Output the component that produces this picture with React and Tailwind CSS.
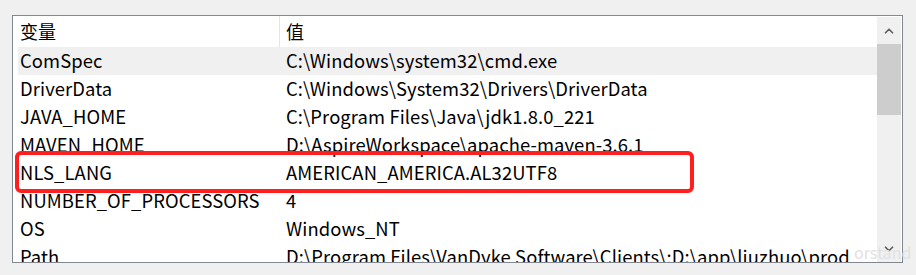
import { ChevronUp, ChevronDown } from 'lucide-react'

const rows = [
  ['ComSpec', 'C:\\Windows\\system32\\cmd.exe'],
  ['DriverData', 'C:\\Windows\\System32\\Drivers\\DriverData'],
  ['JAVA_HOME', 'C:\\Program Files\\Java\\jdk1.8.0_221'],
  ['MAVEN_HOME', 'D:\\AspireWorkspace\\apache-maven-3.6.1'],
  ['NLS_LANG', 'AMERICAN_AMERICA.AL32UTF8'],
  ['NUMBER_OF_PROCESSORS', '4'],
  ['OS', 'Windows_NT'],
  ['Path', 'D:\\Program Files\\VanDyke Software\\Clients\\;D:\\app\\liuzhuo\\prod'],
]

const font = { fontFamily: '"Noto Sans CJK SC", "Noto Sans", sans-serif' }

export default function App() {
  return (
    <div className="relative w-[916px] h-[275px] bg-[#f0f0f0] pl-[12px] pt-[15px] overflow-hidden" style={font}>
      {/* list view */}
      <div className="flex w-[891px] h-[248px] bg-white border border-[#828790] pr-[1px]">
        <div className="flex-1 overflow-hidden">
          {/* header */}
          <div className="flex h-[31px] text-[18px] text-black">
            <div className="w-[267px] pl-[7px] flex items-center border-r border-[#e5e5e5]">变量</div>
            <div className="flex-1 pl-[6px] flex items-center">值</div>
          </div>
          <div className="pl-[5px]">
            {rows.map(([k, v], i) => (
              <div
                key={k}
                className={`flex h-[28px] items-center text-[18.4px] tracking-[0.1px] text-black whitespace-nowrap ${i === 0 ? 'bg-[#f0f0f0]' : ''}`}
              >
                <div className="w-[268px] pl-[2px]">{k}</div>
                <div className="flex-1">{v}</div>
              </div>
            ))}
          </div>
        </div>

        {/* scrollbar */}
        <div className="w-[24px] mt-[1px] bg-[#f0f0f0] flex flex-col items-center">
          <div className="h-[27px] flex items-center justify-center text-[#606060]">
            <ChevronUp size={14} strokeWidth={3} />
          </div>
          <div className="w-[24px] h-[71px] bg-[#cdcdcd]" />
          <div className="flex-1" />
          <div className="h-[27px] flex items-center justify-center text-[#606060]">
            <ChevronDown size={14} strokeWidth={3} />
          </div>
        </div>
      </div>

      {/* highlight frame */}
      <div className="absolute left-[15px] top-[151px] w-[679px] h-[42px] border-[4px] border-[#ff1f1f] rounded-[6px]" />

      {/* watermark */}
      <div className="absolute left-[854px] top-[240px] text-[16px] text-[#e2e2e2]">orstand</div>
    </div>
  )
}
